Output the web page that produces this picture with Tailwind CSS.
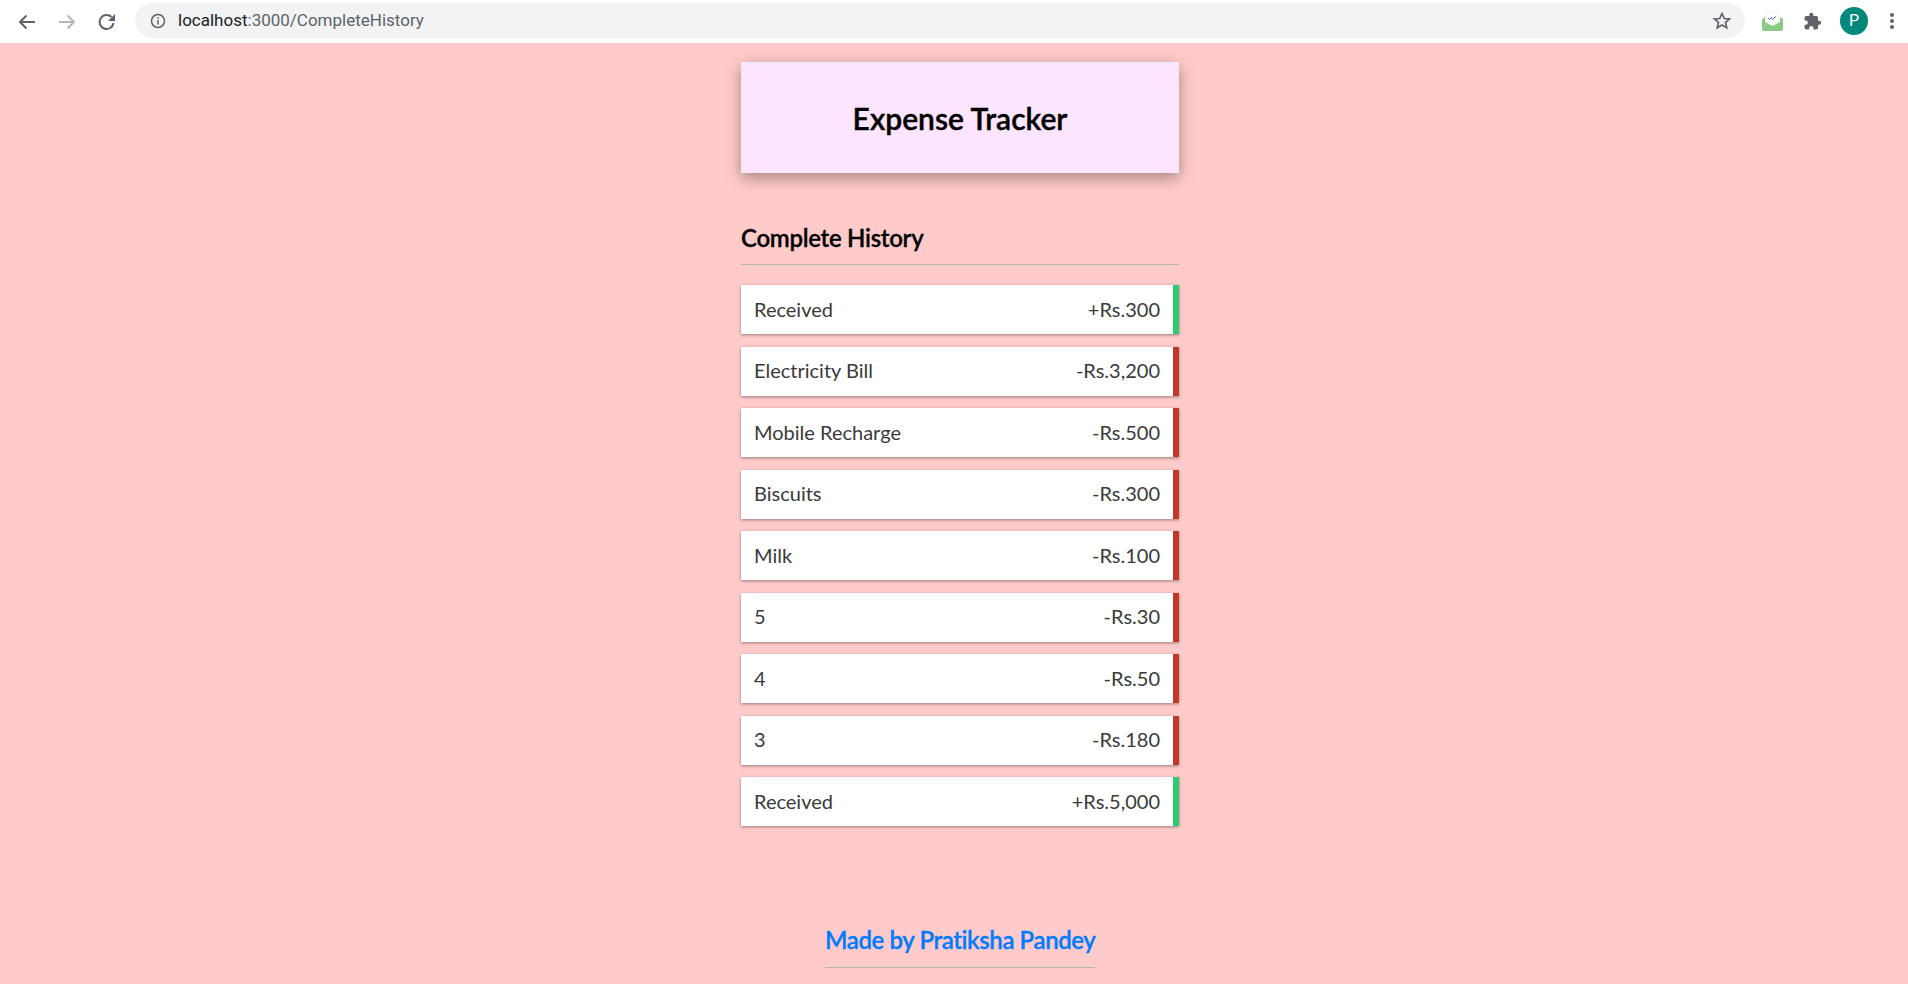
<!DOCTYPE html>
<html><head><meta charset="utf-8"><script src="https://cdn.jsdelivr.net/npm/@tailwindcss/browser@4"></script></head>
<body class="h-screen overflow-hidden bg-[#ffcaca] font-['Lato',sans-serif]">
<div class="h-[43px] bg-white flex items-center relative">
  <div class="flex items-center ml-[17px] gap-[20px] shrink-0">
    <svg class="w-[20px] h-[20px]" viewBox="0 0 20 20" fill="none" stroke="#5f6368" stroke-width="2"><path d="M18 10H3M9.500 3.500 3 10l6.500 6.500"/></svg>
    <svg class="w-[20px] h-[20px]" viewBox="0 0 20 20" fill="none" stroke="#b4b6b9" stroke-width="2"><path d="M2 10h15M10.500 3.500 17 10l-6.500 6.500"/></svg>
    <svg class="w-[20px] h-[20px]" viewBox="0 0 20 20" fill="none" stroke="#5f6368" stroke-width="2"><path d="M16.500 11a7 7 0 1 1-2-6"/><path d="M18 2v7h-7z" fill="#5f6368" stroke="none"/></svg>
  </div>
  <div class="absolute left-[135px] top-[3px] w-[1610px] h-[35px] rounded-full bg-[#f1f3f4] flex items-center">
    <svg class="ml-[15px] w-[16px] h-[16px]" viewBox="0 0 16 16" fill="none" stroke="#5f6368" stroke-width="1.500"><circle cx="8" cy="8" r="6.500"/><path d="M8 7v4.500M8 4.200v1.600"/></svg>
    <span class="ml-[12px] text-[17px] font-['Roboto',sans-serif] text-[#202124]">localhost<span class="text-[#5f6368]">:3000/CompleteHistory</span></span>
    <svg class="ml-auto mr-[13px] w-[20px] h-[20px]" viewBox="0 0 24 24" fill="none" stroke="#5f6368" stroke-width="2"><path d="m12 3 2.700 6 6.300.600-4.800 4.200 1.500 6.400L12 16.800 6.300 20.200l1.500-6.400L3 9.600 9.300 9z"/></svg>
  </div>
  <div class="absolute left-[1762px] top-[10px] w-[21px] h-[22px]">
    <svg class="w-full h-full" viewBox="0 0 21 22"><path d="M4 4 10.500 0 17 4v12H4z" fill="#fff" stroke="#dfe3e0" stroke-width="0.500"/><path d="M0 9 3 7v5l7.500 4L18 12V7l3 2v10a2 2 0 0 1-2 2H2a2 2 0 0 1-2-2z" fill="#8ccb86"/><path d="m6 8 1.500 1.500L10 7M9.500 8.500 10.500 9.500 14 6.500" fill="none" stroke="#5a55d8" stroke-width="1"/></svg>
  </div>
  <svg class="absolute left-[1803px] top-[12px] w-[19px] h-[19px]" viewBox="0 0 24 24" fill="#5f6368"><path d="M20.500 11H19V7a2 2 0 0 0-2-2h-4V3.500a2.500 2.500 0 0 0-5 0V5H4a2 2 0 0 0-2 2v3.800h1.500a2.700 2.700 0 0 1 0 5.400H2V20a2 2 0 0 0 2 2h3.800v-1.500a2.700 2.700 0 0 1 5.400 0V22H17a2 2 0 0 0 2-2v-4h1.500a2.500 2.500 0 0 0 0-5z"/></svg>
  <div class="absolute left-[1840px] top-[7px] w-[28px] h-[28px] rounded-full bg-[#00897b] text-white text-[16px] flex items-center justify-center font-['Roboto',sans-serif]">P</div>
  <svg class="absolute left-[1889px] top-[12px] w-[6px] h-[18px]" viewBox="0 0 6 18" fill="#5f6368"><circle cx="3" cy="3" r="2"/><circle cx="3" cy="9" r="2"/><circle cx="3" cy="15" r="2"/></svg>
</div>
<main class="w-[438px] ml-[741px] flex flex-col">
  <div class="mt-[19px] h-[111px] bg-[#fde4ff] shadow-[0_5px_15px_rgba(0,0,0,0.35)] flex items-center justify-center">
    <h1 class="pt-[2px] text-[30px] font-semibold [-webkit-text-stroke:0.4px_black] text-black">Expense Tracker</h1>
  </div>
  <h2 class="mt-[47px] text-[24px] font-semibold [-webkit-text-stroke:0.3px_black] tracking-[-0.3px] leading-[36px] text-black">Complete History</h2>
  <div class="mt-[8px] h-px bg-[#b5b5ab]"></div>
  <ul class="mt-[20px]">
    <li class="h-[49px] mb-[12.500px] pb-[2px] bg-white shadow-[0_1px_3px_rgba(0,0,0,0.4)] border-r-[6px] border-[#2ecc71] flex items-center justify-between px-[13px] text-[20px] text-[#3a3a3a]"><span>Received</span><span>+Rs.300</span></li>
    <li class="h-[49px] mb-[12.500px] pb-[2px] bg-white shadow-[0_1px_3px_rgba(0,0,0,0.4)] border-r-[6px] border-[#c0392b] flex items-center justify-between px-[13px] text-[20px] text-[#3a3a3a]"><span>Electricity Bill</span><span>-Rs.3,200</span></li>
    <li class="h-[49px] mb-[12.500px] pb-[2px] bg-white shadow-[0_1px_3px_rgba(0,0,0,0.4)] border-r-[6px] border-[#c0392b] flex items-center justify-between px-[13px] text-[20px] text-[#3a3a3a]"><span>Mobile Recharge</span><span>-Rs.500</span></li>
    <li class="h-[49px] mb-[12.500px] pb-[2px] bg-white shadow-[0_1px_3px_rgba(0,0,0,0.4)] border-r-[6px] border-[#c0392b] flex items-center justify-between px-[13px] text-[20px] text-[#3a3a3a]"><span>Biscuits</span><span>-Rs.300</span></li>
    <li class="h-[49px] mb-[12.500px] pb-[2px] bg-white shadow-[0_1px_3px_rgba(0,0,0,0.4)] border-r-[6px] border-[#c0392b] flex items-center justify-between px-[13px] text-[20px] text-[#3a3a3a]"><span>Milk</span><span>-Rs.100</span></li>
    <li class="h-[49px] mb-[12.500px] pb-[2px] bg-white shadow-[0_1px_3px_rgba(0,0,0,0.4)] border-r-[6px] border-[#c0392b] flex items-center justify-between px-[13px] text-[20px] text-[#3a3a3a]"><span>5</span><span>-Rs.30</span></li>
    <li class="h-[49px] mb-[12.500px] pb-[2px] bg-white shadow-[0_1px_3px_rgba(0,0,0,0.4)] border-r-[6px] border-[#c0392b] flex items-center justify-between px-[13px] text-[20px] text-[#3a3a3a]"><span>4</span><span>-Rs.50</span></li>
    <li class="h-[49px] mb-[12.500px] pb-[2px] bg-white shadow-[0_1px_3px_rgba(0,0,0,0.4)] border-r-[6px] border-[#c0392b] flex items-center justify-between px-[13px] text-[20px] text-[#3a3a3a]"><span>3</span><span>-Rs.180</span></li>
    <li class="h-[49px] pb-[2px] bg-white shadow-[0_1px_3px_rgba(0,0,0,0.4)] border-r-[6px] border-[#2ecc71] flex items-center justify-between px-[13px] text-[20px] text-[#3a3a3a]"><span>Received</span><span>+Rs.5,000</span></li>
  </ul>
  <footer class="mt-[96px] self-center w-[270px] text-center border-b border-[#b5b5ab] pb-[9px] whitespace-nowrap">
    <a class="text-[24px] font-semibold [-webkit-text-stroke:0.3px_#007bff] tracking-[-0.4px] leading-[36px] text-[#007bff]">Made by Pratiksha Pandey</a>
  </footer>
</main>
</body></html>
